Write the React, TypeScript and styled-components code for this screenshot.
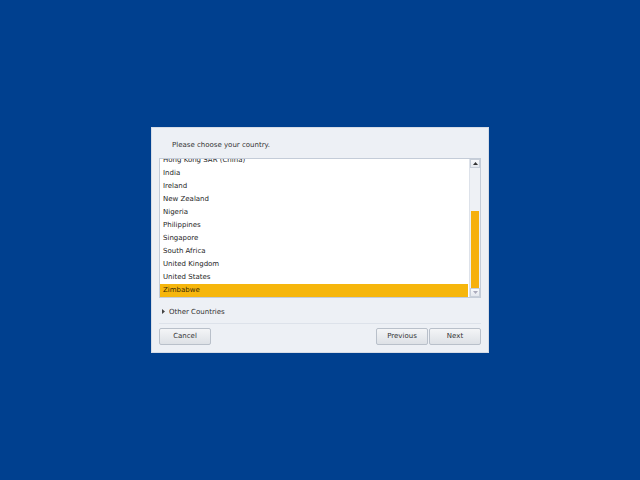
import React from "react";
import styled, { createGlobalStyle } from "styled-components";

const GlobalStyle = createGlobalStyle`
  *, *::before, *::after {
    box-sizing: border-box;
  }
  html, body {
    margin: 0;
    padding: 0;
    background: #00408f;
  }
  body {
    font-family: "DejaVu Sans", "Liberation Sans", sans-serif;
    font-size: 7px;
    color: #1e1e1e;
  }
`;

const countries = [
  "Hong Kong SAR (China)",
  "India",
  "Ireland",
  "New Zealand",
  "Nigeria",
  "Philippines",
  "Singapore",
  "South Africa",
  "United Kingdom",
  "United States",
  "Zimbabwe",
];

export default function App() {
  return (
    <>
      <GlobalStyle />
      <Screen>
        <Dialog>
          <Prompt>Please choose your country.</Prompt>
          <ListFrame>
            <ListView>
              <Rows>
                {countries.map((c) => (
                  <Row key={c} selected={c === "Zimbabwe"}>
                    {c}
                  </Row>
                ))}
              </Rows>
            </ListView>
            <ScrollBar>
              <ArrowButton>
                <svg width="7" height="5" viewBox="0 0 7 5">
                  <path d="M1 4 L3.5 1 L6 4 Z" fill="#333" />
                </svg>
              </ArrowButton>
              <Track>
                <Thumb />
              </Track>
              <ArrowButton>
                <svg width="7" height="5" viewBox="0 0 7 5">
                  <path d="M1 1 L3.5 4 L6 1 Z" fill="#aab" />
                </svg>
              </ArrowButton>
            </ScrollBar>
          </ListFrame>
          <Expander>
            <svg width="3" height="5" viewBox="0 0 3 5">
              <path d="M0 0 L3 2.5 L0 5 Z" fill="#444" />
            </svg>
            <span>Other Countries</span>
          </Expander>
          <Separator />
          <ButtonRow>
            <Button>Cancel</Button>
            <Spacer />
            <Button>Previous</Button>
            <Button>Next</Button>
          </ButtonRow>
        </Dialog>
      </Screen>
    </>
  );
}

const Screen = styled.div`
  width: 640px;
  height: 480px;
  display: flex;
  align-items: center;
  justify-content: center;
`;

const Dialog = styled.div`
  width: 338px;
  height: 226px;
  background: #edf0f5;
  border: 1px solid #d6dce6;
  display: flex;
  flex-direction: column;
  padding: 0 7px;
`;

const Prompt = styled.div`
  height: 30px;
  line-height: 34px;
  padding-left: 13px;
  color: #333;
`;

const ListFrame = styled.div`
  height: 140px;
  border: 1px solid #c4ccd8;
  background: #fff;
  display: flex;
`;

const ListView = styled.div`
  flex: 1;
  overflow: hidden;
`;

const Rows = styled.div`
  margin-top: -5px;
`;

const Row = styled.div<{ selected?: boolean }>`
  height: 13px;
  line-height: 13px;
  padding-left: 3px;
  background: ${(p) => (p.selected ? "#f6b60c" : "transparent")};
  color: ${(p) => (p.selected ? "#3b2a05" : "#1e1e1e")};
  margin-right: ${(p) => (p.selected ? "1px" : "0")};
`;

const ScrollBar = styled.div`
  width: 11px;
  display: flex;
  flex-direction: column;
  background: #edf0f5;
  border-left: 1px solid #dde2ea;
`;

const ArrowButton = styled.div`
  height: 9px;
  display: flex;
  align-items: center;
  justify-content: center;
  background: linear-gradient(#f8f9fb, #e4e8ee);
  border: 1px solid #c8cfd9;
`;

const Track = styled.div`
  flex: 1;
  display: flex;
  flex-direction: column;
  justify-content: flex-end;
  padding: 0 1px;
  background: #eef1f5;
`;

const Thumb = styled.div`
  height: 77px;
  background: #f6b00c;
`;

const Expander = styled.div`
  height: 25px;
  padding: 2px 0 0 3px;
  display: flex;
  align-items: center;
  gap: 4px;
  color: #333;
`;

const Separator = styled.div`
  height: 1px;
  background: #dde2ea;
`;

const ButtonRow = styled.div`
  display: flex;
  align-items: center;
  padding-top: 4px;
`;

const Spacer = styled.div`
  flex: 1;
`;

const Button = styled.div`
  width: 52px;
  height: 17px;
  line-height: 15px;
  text-align: center;
  color: #333;
  background: linear-gradient(#f4f5f7, #dde1e6);
  border: 1px solid #b9c0ca;
  border-radius: 2px;
  & + & {
    margin-left: 1px;
  }
`;
